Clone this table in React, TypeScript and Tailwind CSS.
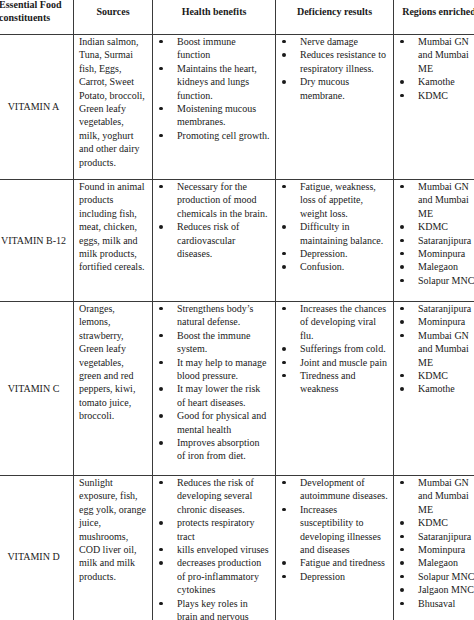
import React from 'react';

type Row = {
    name: string;
    height: string;
    sources: string[];
    health: string[][];
    deficiency: string[][];
    regions: string[][];
};

const mumbai = ['Mumbai GN', 'and Mumbai', 'ME'];

const rows: Row[] = [
    {
        name: 'VITAMIN A',
        height: 'h-[145px]',
        sources: ['Indian salmon,', 'Tuna, Surmai', 'fish, Eggs,', 'Carrot, Sweet', 'Potato, broccoli,', 'Green leafy', 'vegetables,', 'milk, yoghurt', 'and other dairy', 'products.'],
        health: [['Boost immune', 'function'], ['Maintains the heart,', 'kidneys and lungs', 'function.'], ['Moistening mucous', 'membranes.'], ['Promoting cell growth.']],
        deficiency: [['Nerve damage'], ['Reduces resistance to', 'respiratory illness.'], ['Dry mucous', 'membrane.']],
        regions: [mumbai, ['Kamothe'], ['KDMC']],
    },
    {
        name: 'VITAMIN B-12',
        height: 'h-[122px]',
        sources: ['Found in animal', 'products', 'including fish,', 'meat, chicken,', 'eggs, milk and', 'milk products,', 'fortified cereals.'],
        health: [['Necessary for the', 'production of mood', 'chemicals in the brain.'], ['Reduces risk of', 'cardiovascular', 'diseases.']],
        deficiency: [['Fatigue, weakness,', 'loss of appetite,', 'weight loss.'], ['Difficulty in', 'maintaining balance.'], ['Depression.'], ['Confusion.']],
        regions: [mumbai, ['KDMC'], ['Sataranjipura'], ['Mominpura'], ['Malegaon'], ['Solapur MNC']],
    },
    {
        name: 'VITAMIN C',
        height: 'h-[174px]',
        sources: ['Oranges,', 'lemons,', 'strawberry,', 'Green leafy', 'vegetables,', 'green and red', 'peppers, kiwi,', 'tomato juice,', 'broccoli.'],
        health: [['Strengthens body\u2019s', 'natural defense.'], ['Boost the immune', 'system.'], ['It may help to manage', 'blood pressure.'], ['It may lower the risk', 'of heart diseases.'], ['Good for physical and', 'mental health'], ['Improves absorption', 'of iron from diet.']],
        deficiency: [['Increases the chances', 'of developing viral', 'flu.'], ['Sufferings from cold.'], ['Joint and muscle pain'], ['Tiredness and', 'weakness']],
        regions: [['Sataranjipura'], ['Mominpura'], mumbai, ['KDMC'], ['Kamothe']],
    },
    {
        name: 'VITAMIN D',
        height: 'h-[162px]',
        sources: ['Sunlight', 'exposure, fish,', 'egg yolk, orange', 'juice,', 'mushrooms,', 'COD liver oil,', 'milk and milk', 'products.'],
        health: [['Reduces the risk of', 'developing several', 'chronic diseases.'], ['protects respiratory', 'tract'], ['kills enveloped viruses'], ['decreases production', 'of pro-inflammatory', 'cytokines'], ['Plays key roles in', 'brain and nervous', 'system.']],
        deficiency: [['Development of', 'autoimmune diseases.'], ['Increases', 'susceptibility to', 'developing illnesses', 'and diseases'], ['Fatigue and tiredness'], ['Depression']],
        regions: [mumbai, ['KDMC'], ['Sataranjipura'], ['Mominpura'], ['Malegaon'], ['Solapur MNC'], ['Jalgaon MNC'], ['Bhusaval']],
    },
];

const cell = 'border-r border-b border-[#3a3a3a]';

const Lines: React.FC<{ lines: string[] }> = ({ lines }) => (
    <div>
        {lines.map((l, i) => (
            <div key={i} className="whitespace-nowrap">{l}</div>
        ))}
    </div>
);

// bullet dot sits on the first line of each item
const Bullets: React.FC<{ items: string[][] }> = ({ items }) => (
    <div className="flex flex-col">
        {items.map((item, i) => (
            <div key={i} className="flex">
                <span className="w-[19px] shrink-0 h-[13.4px] flex items-center pl-[1px]">
                    <span className="w-[3.5px] h-[3.5px] rounded-full bg-[#1a1a1a]" />
                </span>
                <Lines lines={item} />
            </div>
        ))}
    </div>
);

export default function App() {
    return (
        <div className="w-[474px] h-[620px] overflow-hidden bg-white">
            <div
                className="-mt-[12px] -ml-[7px] grid grid-cols-[80px_79px_123px_118px_91px] text-[10px] leading-[13.4px] text-[#1a1a1a] border-l border-t border-[#3a3a3a]"
                style={{ fontFamily: '"Liberation Serif", "Times New Roman", serif' }}
            >
                {/* header */}
                <div className={`${cell} h-[46px] flex flex-col justify-center pl-[5px] font-bold leading-[12.7px]`}>
                    <div className="whitespace-nowrap">Essential Food</div>
                    <div className="whitespace-nowrap">constituents</div>
                </div>
                {['Sources', 'Health benefits', 'Deficiency results', 'Regions enriched'].map((h) => (
                    <div key={h} className={`${cell} h-[46px] flex items-center justify-center font-bold whitespace-nowrap`}>
                        {h}
                    </div>
                ))}

                {rows.map((r) => (
                    <React.Fragment key={r.name}>
                        <div className={`${cell} ${r.height} flex items-center justify-center whitespace-nowrap`}>{r.name}</div>
                        <div className={`${cell} ${r.height} pl-[5px]`}>
                            <Lines lines={r.sources} />
                        </div>
                        <div className={`${cell} ${r.height} pl-[5px]`}>
                            <Bullets items={r.health} />
                        </div>
                        <div className={`${cell} ${r.height} pl-[5px]`}>
                            <Bullets items={r.deficiency} />
                        </div>
                        <div className={`${cell} ${r.height} pl-[5px]`}>
                            <Bullets items={r.regions} />
                        </div>
                    </React.Fragment>
                ))}
            </div>
        </div>
    );
}
